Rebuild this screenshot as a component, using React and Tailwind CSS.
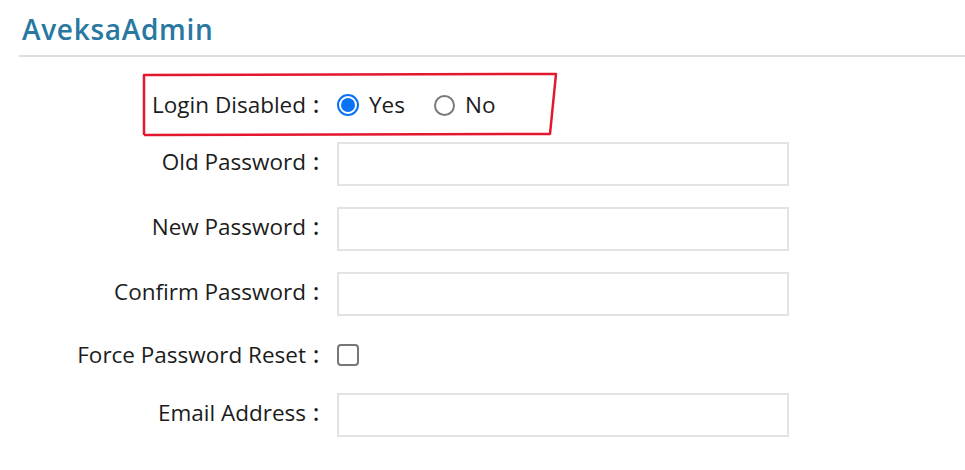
import React from "react";

function Label({ children, lift }) {
  return (
    <div
      className={
        "w-[326px] shrink-0 flex items-center justify-end text-[22.5px] text-[#1c1c1c] " +
        (lift ? "pb-[4px]" : "")
      }
    >
      <span>{children}</span>
      <span className="w-[20px] text-center font-semibold">:</span>
    </div>
  );
}

function TextRow({ label }) {
  return (
    <div className="flex items-center h-[44px]">
      <Label lift>{label}</Label>
      <div className="ml-[11px] w-[452px] h-[44px] border-2 border-[#e3e3e3] bg-white" />
    </div>
  );
}

function Radio({ checked, label }) {
  return (
    <div className="flex items-center">
      {checked ? (
        <div className="w-[22px] h-[22px] rounded-full border-2 border-[#0a72f5] flex items-center justify-center">
          <div className="w-[14px] h-[14px] rounded-full bg-[#0a72f5]" />
        </div>
      ) : (
        <div className="w-[21px] h-[21px] rounded-full border-2 border-[#7a7a7a]" />
      )}
      <span className="ml-[10px] text-[22.5px] text-[#1c1c1c]">{label}</span>
    </div>
  );
}

export default function App() {
  return (
    <div className="relative w-[965px] h-[470px] bg-white font-['Open_Sans',sans-serif] overflow-hidden">
      <div className="pt-[11px] pl-[22px] h-[48px] text-[28px] leading-[36px] font-semibold text-[#2878a2] tracking-[0.7px]">
        AveksaAdmin
      </div>
      <div className="ml-[19px] mt-[7px] h-[2px] bg-[#dedede]" />

      <div className="mt-[32px] flex flex-col gap-[21px]">
        <div className="flex items-center h-[32px]">
          <Label>Login Disabled</Label>
          <div className="ml-[11px] flex items-center gap-[29px]">
            <Radio checked label="Yes" />
            <Radio label="No" />
          </div>
        </div>
        <TextRow label="Old Password" />
        <TextRow label="New Password" />
        <TextRow label="Confirm Password" />
        <div className="flex items-center h-[35px]">
          <Label>Force Password Reset</Label>
          <div className="ml-[11px] w-[22px] h-[22px] rounded-[4px] border-2 border-[#777777] bg-white" />
        </div>
        <TextRow label="Email Address" />
      </div>

      <svg
        className="absolute left-0 top-0 pointer-events-none"
        width="965"
        height="470"
        viewBox="0 0 965 470"
      >
        <polyline
          points="144,135 144,75 556,74 550,134 144,135"
          fill="none"
          stroke="#e3172d"
          strokeWidth="2.5"
          strokeLinejoin="round"
        />
      </svg>
    </div>
  );
}
